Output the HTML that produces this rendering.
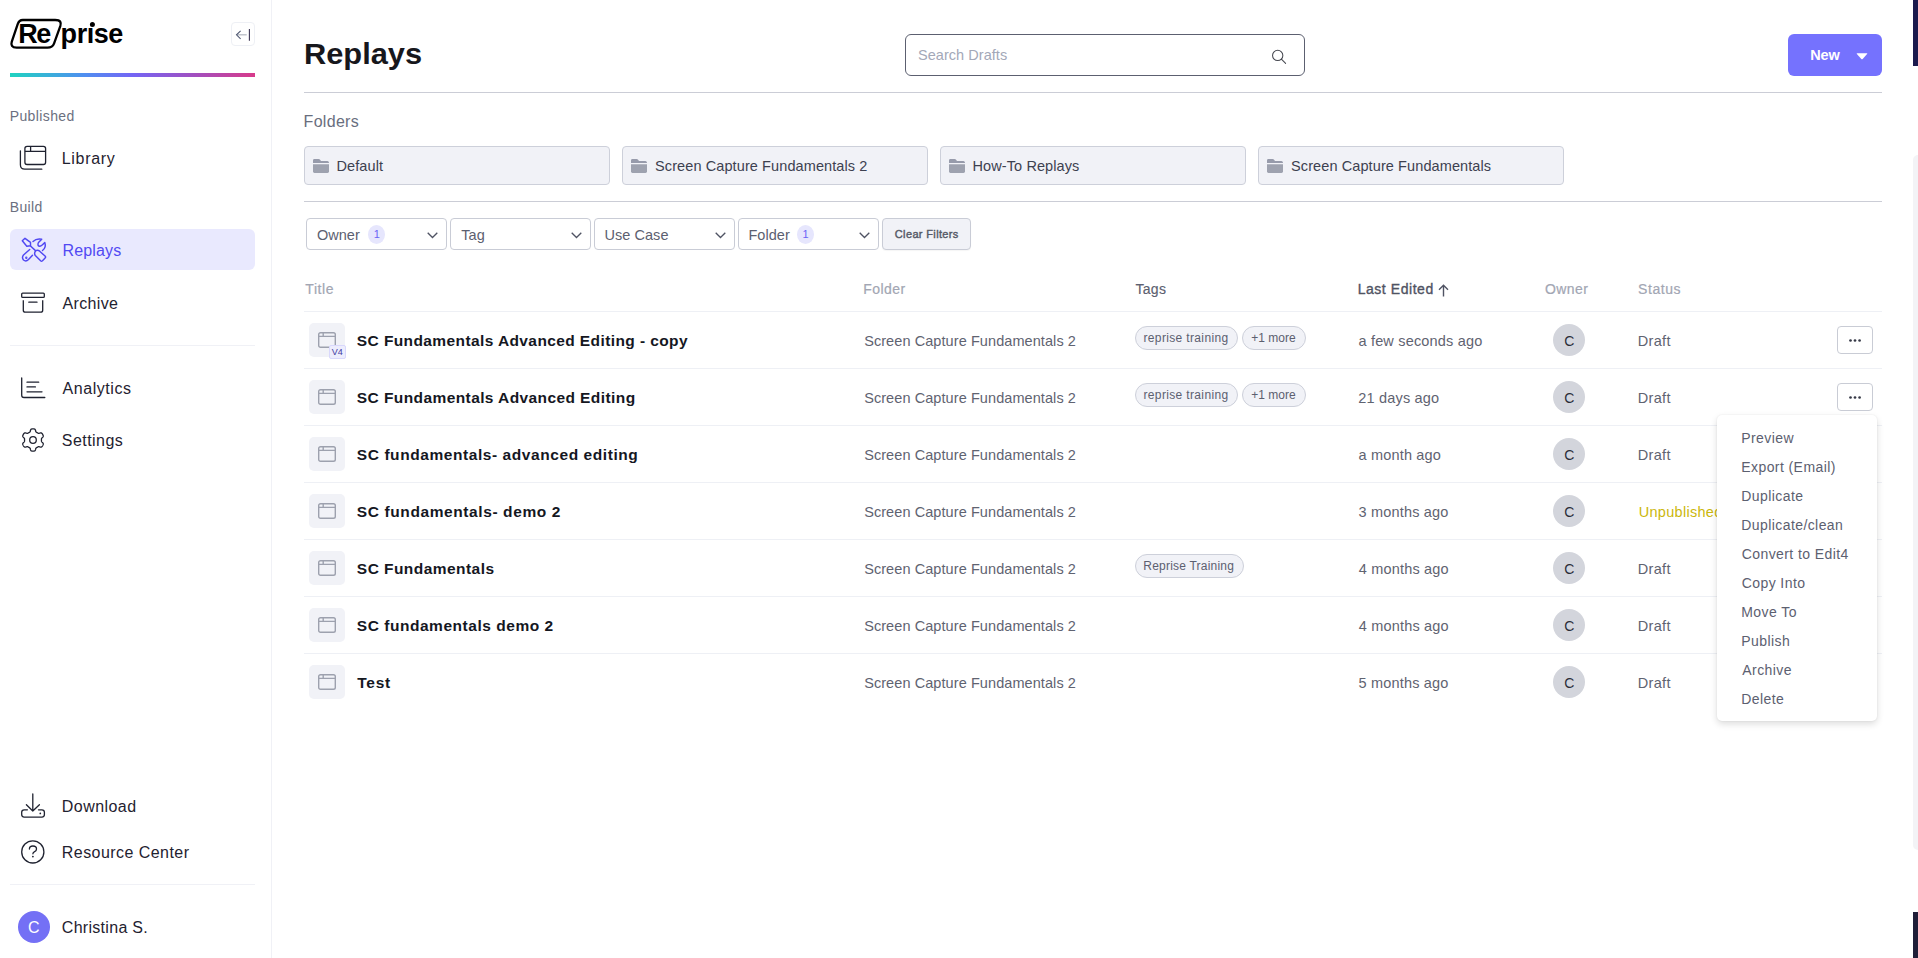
<!DOCTYPE html>
<html><head><meta charset="utf-8"><style>
*{box-sizing:border-box;margin:0;padding:0}
html,body{width:1918px;height:958px;overflow:hidden;background:#fff;font-family:"Liberation Sans",sans-serif}
.abs{position:absolute}
.t{position:absolute;line-height:1;white-space:nowrap}
.hr{position:absolute;height:1px}
svg{position:absolute;overflow:visible}
</style></head><body>
<div class="abs" style="left:271px;top:0;width:1px;height:958px;background:#f0f1f6"></div>
<div class="abs" style="left:10px;top:18px;width:116px;height:32px">
<svg style="left:0;top:0" width="116" height="32" viewBox="0 0 116 32"><path d="M12.8 2 H45.2 C50.6 2 51.5 4.6 50.3 8.2 L44 25.6 C42.9 28.6 41 29.6 37.5 29.6 H6.6 C1.8 29.6 0.7 26.9 1.8 23.6 L7.7 6.2 C8.7 3.2 10 2 12.8 2 Z" fill="none" stroke="#000" stroke-width="2.3"/></svg>
</div>
<div class="t" style="left:18.19px;top:21px;font-size:27px;color:#000;font-weight:bold;letter-spacing:-1.5px;">Re</div>
<div class="t" style="left:60.62px;top:21px;font-size:27px;color:#000;font-weight:bold;letter-spacing:-0.45px;">prıse</div>
<svg style="left:0;top:0" width="130" height="60"><circle cx="92.4" cy="24.6" r="2.5" fill="#000"/></svg>
<div class="abs" style="left:231px;top:22px;width:24px;height:24px;border:1px solid #eef0f5;border-radius:4px"></div>
<svg style="left:225px;top:15px" width="40" height="40" viewBox="0 0 40 40"><path d="M12.2 19.8 H21.7" stroke="#b9bdc6" stroke-width="1.3"/><path d="M15.6 15.9 L11.5 19.8 L15.6 23.9" fill="none" stroke="#4d5670" stroke-width="1.05"/><path d="M24.4 14 V25.7" stroke="#3c3555" stroke-width="1.1"/></svg>
<div class="abs" style="left:10px;top:73px;width:245px;height:4px;background:linear-gradient(90deg,#1fd3c0 0%,#4f8ff0 30%,#7465f5 50%,#a14fc0 75%,#d83a8a 100%)"></div>
<div class="t" style="left:9.65px;top:109px;font-size:14px;color:#6b7080;font-weight:normal;letter-spacing:0.4px;">Published</div>
<svg style="left:14px;top:140px" width="40" height="35" viewBox="0 0 40 35"><g fill="none" stroke="#1f2230" stroke-width="1.3"><rect x="10.9" y="6.4" width="20.7" height="18.1" rx="2.2"/><path d="M10.9 11.3 H31.6 M16.6 6.4 V11.3"/><path d="M6.4 10.8 V24.7 Q6.4 29.2 10.9 29.2 H27.8" stroke-linecap="round"/></g></svg>
<div class="t" style="left:61.69px;top:151px;font-size:16px;color:#1f2230;font-weight:normal;letter-spacing:0.7px;">Library</div>
<div class="t" style="left:9.65px;top:200px;font-size:14px;color:#6b7080;font-weight:normal;letter-spacing:0.4px;">Build</div>
<div class="abs" style="left:10px;top:229px;width:245px;height:41px;border-radius:6px;background:#e9e9fe"></div>
<svg style="left:18px;top:233px" width="32" height="32" viewBox="0 0 32 32"><g fill="none" stroke="#5148f2" stroke-width="1.45" stroke-linejoin="round" stroke-linecap="round"><path d="M15 8.5 Q18.5 5.2 23.7 6.3 L20.5 9.5 Q19 12.5 21.5 13.3 Q23 13.6 26.8 9.5 Q28.5 14.5 24.5 17.5"/><path d="M11.7 16.5 L5.5 22 Q3.5 24.5 5.5 27 Q8 29 10.5 26.5 L14.5 22.2"/><path d="M7 5.3 L12.5 9.3 L12.5 12.7 L8.8 13.3 L4.3 7.8 Z"/><path d="M12.5 13 L17.5 17.6"/><path d="M17.5 18 Q19.5 16.6 21.7 18.2 L27.3 23.3 Q28 24.2 27.1 25.1 L24.5 27.8 Q23.5 28.6 22.6 27.8 L17.3 22.5 Q15.8 20.3 17.5 18 Z"/><circle cx="8.3" cy="24.7" r="0.45" fill="#5148f2"/></g></svg>
<div class="t" style="left:62.49px;top:243px;font-size:16px;color:#5249f3;font-weight:normal;letter-spacing:0.15px;">Replays</div>
<svg style="left:14px;top:285px" width="40" height="35" viewBox="0 0 40 35"><g fill="none" stroke="#1f2230" stroke-width="1.3"><rect x="7.7" y="8.1" width="22.6" height="4.3" rx="1"/><path d="M9.3 15.2 V25.2 Q9.3 27.2 11.3 27.2 H26.7 Q28.7 27.2 28.7 25.2 V15.2"/><path d="M14.8 17.2 H23" stroke-linecap="round"/></g></svg>
<div class="t" style="left:62.47px;top:296px;font-size:16px;color:#1f2230;font-weight:normal;letter-spacing:0.35px;">Archive</div>
<div class="hr" style="left:10px;top:345px;width:245px;background:#f0f1f6"></div>
<svg style="left:14px;top:370px" width="40" height="35" viewBox="0 0 40 35"><g fill="none" stroke="#1f2230" stroke-width="1.3" stroke-linecap="round"><path d="M7.7 8 V25.2 Q7.7 27.5 10 27.5 H30.8"/><path d="M13 12.2 H24.7 M13 16.9 H21.4 M13 21.8 H28"/></g></svg>
<div class="t" style="left:62.57px;top:381px;font-size:16px;color:#1f2230;font-weight:normal;letter-spacing:0.55px;">Analytics</div>
<svg style="left:14px;top:424px" width="40" height="35" viewBox="0 0 40 35"><g fill="none" stroke="#1f2230" stroke-width="1.3" stroke-linejoin="round"><path d="M19.00 4.85 L19.29 4.86 L19.58 4.87 L19.87 4.90 L20.16 4.95 L20.44 5.03 L20.72 5.15 L20.98 5.33 L21.21 5.61 L21.39 6.03 L21.54 6.53 L21.65 7.04 L21.78 7.46 L21.92 7.75 L22.09 7.96 L22.27 8.12 L22.45 8.24 L22.65 8.35 L22.84 8.46 L23.03 8.57 L23.23 8.68 L23.42 8.79 L23.61 8.91 L23.80 9.02 L23.99 9.13 L24.20 9.23 L24.42 9.31 L24.68 9.35 L25.01 9.33 L25.43 9.22 L25.93 9.07 L26.44 8.94 L26.89 8.89 L27.25 8.95 L27.54 9.08 L27.78 9.26 L27.99 9.47 L28.17 9.70 L28.34 9.93 L28.51 10.18 L28.66 10.43 L28.80 10.68 L28.93 10.94 L29.05 11.21 L29.15 11.48 L29.22 11.77 L29.26 12.06 L29.23 12.38 L29.10 12.72 L28.84 13.09 L28.47 13.46 L28.08 13.82 L27.79 14.13 L27.60 14.41 L27.50 14.65 L27.46 14.89 L27.45 15.11 L27.44 15.34 L27.45 15.56 L27.45 15.78 L27.45 16.00 L27.45 16.22 L27.45 16.44 L27.44 16.66 L27.45 16.89 L27.46 17.11 L27.50 17.35 L27.60 17.59 L27.79 17.87 L28.08 18.18 L28.47 18.54 L28.84 18.91 L29.10 19.28 L29.23 19.62 L29.26 19.94 L29.22 20.23 L29.15 20.52 L29.05 20.79 L28.93 21.06 L28.80 21.32 L28.66 21.57 L28.51 21.82 L28.34 22.07 L28.17 22.30 L27.99 22.53 L27.78 22.74 L27.54 22.92 L27.25 23.05 L26.89 23.11 L26.44 23.06 L25.93 22.93 L25.43 22.78 L25.01 22.67 L24.68 22.65 L24.42 22.69 L24.20 22.77 L23.99 22.87 L23.80 22.98 L23.61 23.09 L23.42 23.21 L23.23 23.32 L23.03 23.43 L22.84 23.54 L22.65 23.65 L22.45 23.76 L22.27 23.88 L22.09 24.04 L21.92 24.25 L21.78 24.54 L21.65 24.96 L21.54 25.47 L21.39 25.97 L21.21 26.39 L20.98 26.67 L20.72 26.85 L20.44 26.97 L20.16 27.05 L19.87 27.10 L19.58 27.13 L19.29 27.14 L19.00 27.15 L18.71 27.14 L18.42 27.13 L18.13 27.10 L17.84 27.05 L17.56 26.97 L17.28 26.85 L17.02 26.67 L16.79 26.39 L16.61 25.97 L16.46 25.47 L16.35 24.96 L16.22 24.54 L16.08 24.25 L15.91 24.04 L15.73 23.88 L15.55 23.76 L15.35 23.65 L15.16 23.54 L14.97 23.43 L14.78 23.32 L14.58 23.21 L14.39 23.09 L14.20 22.98 L14.01 22.87 L13.80 22.77 L13.58 22.69 L13.32 22.65 L12.99 22.67 L12.57 22.78 L12.07 22.93 L11.56 23.06 L11.11 23.11 L10.75 23.05 L10.46 22.92 L10.22 22.74 L10.01 22.53 L9.83 22.30 L9.66 22.07 L9.49 21.82 L9.34 21.58 L9.20 21.32 L9.07 21.06 L8.95 20.79 L8.85 20.52 L8.78 20.23 L8.74 19.94 L8.77 19.62 L8.90 19.28 L9.16 18.91 L9.53 18.54 L9.92 18.18 L10.21 17.87 L10.40 17.59 L10.50 17.35 L10.54 17.11 L10.55 16.89 L10.56 16.66 L10.55 16.44 L10.55 16.22 L10.55 16.00 L10.55 15.78 L10.55 15.56 L10.56 15.34 L10.55 15.11 L10.54 14.89 L10.50 14.65 L10.40 14.41 L10.21 14.13 L9.92 13.82 L9.53 13.46 L9.16 13.09 L8.90 12.72 L8.77 12.38 L8.74 12.06 L8.78 11.77 L8.85 11.48 L8.95 11.21 L9.07 10.94 L9.20 10.68 L9.34 10.42 L9.49 10.18 L9.66 9.93 L9.83 9.70 L10.01 9.47 L10.22 9.26 L10.46 9.08 L10.75 8.95 L11.11 8.89 L11.56 8.94 L12.07 9.07 L12.57 9.22 L12.99 9.33 L13.32 9.35 L13.58 9.31 L13.80 9.23 L14.01 9.13 L14.20 9.02 L14.39 8.91 L14.58 8.79 L14.78 8.68 L14.97 8.57 L15.16 8.46 L15.35 8.35 L15.55 8.24 L15.73 8.12 L15.91 7.96 L16.08 7.75 L16.22 7.46 L16.35 7.04 L16.46 6.53 L16.61 6.03 L16.79 5.61 L17.02 5.33 L17.28 5.15 L17.56 5.03 L17.84 4.95 L18.13 4.90 L18.42 4.87 L18.71 4.86 L19.00 4.85 Z"/><circle cx="19" cy="16" r="3.3"/></g></svg>
<div class="t" style="left:61.87px;top:433px;font-size:16px;color:#1f2230;font-weight:normal;letter-spacing:0.45px;">Settings</div>
<svg style="left:14px;top:785px" width="40" height="35" viewBox="0 0 40 35"><g fill="none" stroke="#1f2230" stroke-width="1.3" stroke-linecap="round" stroke-linejoin="round"><path d="M18.8 8.9 V26.1 M12.4 19.7 L18.8 26 L25.4 19.7"/><path d="M13.4 24.8 H10.2 Q7.7 24.8 7.7 27.3 V29.6 Q7.7 32.1 10.2 32.1 H27.9 Q30.4 32.1 30.4 29.6 V27.3 Q30.4 24.8 27.9 24.8 H24.5"/></g><circle cx="26.3" cy="28.4" r="0.85" fill="#1f2230"/></svg>
<div class="t" style="left:61.79px;top:799px;font-size:16px;color:#1f2230;font-weight:normal;letter-spacing:0.45px;">Download</div>
<svg style="left:14px;top:835px" width="40" height="35" viewBox="0 0 40 35"><g fill="none" stroke="#1f2230" stroke-width="1.3" stroke-linecap="round"><circle cx="18.8" cy="16.9" r="11.1"/><path d="M15.4 14.1 Q15.4 11 18.9 11 Q22.5 11 22.5 13.9 Q22.5 15.8 20.6 16.7 Q18.9 17.5 18.9 18.8"/></g><circle cx="18.9" cy="21.6" r="0.9" fill="#1f2230"/></svg>
<div class="t" style="left:61.79px;top:845px;font-size:16px;color:#1f2230;font-weight:normal;letter-spacing:0.45px;">Resource Center</div>
<div class="hr" style="left:10px;top:884px;width:245px;background:#f0f1f6"></div>
<div class="abs" style="left:18px;top:911px;width:32px;height:32px;border-radius:50%;background:#7470f5"></div>
<div class="t" style="left:27.99px;top:920px;font-size:16px;color:#fff;font-weight:normal;letter-spacing:0px;">C</div>
<div class="t" style="left:61.79px;top:920px;font-size:16px;color:#1f2230;font-weight:normal;letter-spacing:0.3px;">Christina S.</div>
<div class="t" style="left:303.79px;top:39px;font-size:30px;color:#17171c;font-weight:bold;letter-spacing:0px;transform:scaleX(1.026);transform-origin:0 0;">Replays</div>
<div class="abs" style="left:905px;top:34px;width:400px;height:41.5px;border:1px solid #5c6070;border-radius:6px"></div>
<div class="t" style="left:917.94px;top:48px;font-size:14.5px;color:#a3a8b8;font-weight:normal;letter-spacing:0.05px;">Search Drafts</div>
<svg style="left:1270px;top:48px" width="20" height="20" viewBox="0 0 20 20"><circle cx="7.7" cy="7.4" r="5.15" fill="none" stroke="#45474f" stroke-width="1.05"/><path d="M11.4 11.2 L15.6 15.4" stroke="#45474f" stroke-width="1.05" stroke-linecap="round"/></svg>
<div class="abs" style="left:1788px;top:34px;width:94px;height:42px;border-radius:6px;background:#7572fe"></div>
<div class="t" style="left:1810.23px;top:48px;font-size:14.5px;color:#fff;font-weight:bold;letter-spacing:-0.1px;">New</div>
<svg style="left:1856px;top:53px" width="12" height="7" viewBox="0 0 12 7"><path d="M1.2 0.2 H10.8 Q11.8 0.2 11.1 1 L6.7 5.9 Q6 6.6 5.3 5.9 L0.9 1 Q0.2 0.2 1.2 0.2 Z" fill="#fff"/></svg>
<div class="hr" style="left:304px;top:92px;width:1578px;background:#cbcdd6"></div>
<div class="t" style="left:303.59px;top:114px;font-size:16px;color:#696e7e;font-weight:normal;letter-spacing:0.3px;">Folders</div>
<div class="abs" style="left:304px;top:146px;width:306px;height:38.5px;border:1px solid #cdd0da;border-radius:4px;background:#f1f2f7"></div>
<svg style="left:313px;top:159px" width="16" height="14" viewBox="0 0 16 14"><path d="M0 4.1 V1.4 Q0 0 1.4 0 H5.6 Q6.4 0 6.9 0.6 L8 1.9 H14.3 Q15.3 1.9 15.8 2.9 L16 4.1 Z" fill="#979bab"/><path d="M0 5.2 H16 V12.6 Q16 14 14.6 14 H1.4 Q0 14 0 12.6 Z" fill="#9ea2af"/></svg>
<div class="t" style="left:336.51px;top:159px;font-size:14.5px;color:#3d4150;font-weight:normal;letter-spacing:0.1px;">Default</div>
<div class="abs" style="left:622px;top:146px;width:306px;height:38.5px;border:1px solid #cdd0da;border-radius:4px;background:#f1f2f7"></div>
<svg style="left:631px;top:159px" width="16" height="14" viewBox="0 0 16 14"><path d="M0 4.1 V1.4 Q0 0 1.4 0 H5.6 Q6.4 0 6.9 0.6 L8 1.9 H14.3 Q15.3 1.9 15.8 2.9 L16 4.1 Z" fill="#979bab"/><path d="M0 5.2 H16 V12.6 Q16 14 14.6 14 H1.4 Q0 14 0 12.6 Z" fill="#9ea2af"/></svg>
<div class="t" style="left:655.04px;top:159px;font-size:14.5px;color:#3d4150;font-weight:normal;letter-spacing:0.1px;">Screen Capture Fundamentals 2</div>
<div class="abs" style="left:940px;top:146px;width:306px;height:38.5px;border:1px solid #cdd0da;border-radius:4px;background:#f1f2f7"></div>
<svg style="left:949px;top:159px" width="16" height="14" viewBox="0 0 16 14"><path d="M0 4.1 V1.4 Q0 0 1.4 0 H5.6 Q6.4 0 6.9 0.6 L8 1.9 H14.3 Q15.3 1.9 15.8 2.9 L16 4.1 Z" fill="#979bab"/><path d="M0 5.2 H16 V12.6 Q16 14 14.6 14 H1.4 Q0 14 0 12.6 Z" fill="#9ea2af"/></svg>
<div class="t" style="left:972.51px;top:159px;font-size:14.5px;color:#3d4150;font-weight:normal;letter-spacing:0.1px;">How-To Replays</div>
<div class="abs" style="left:1258px;top:146px;width:306px;height:38.5px;border:1px solid #cdd0da;border-radius:4px;background:#f1f2f7"></div>
<svg style="left:1267px;top:159px" width="16" height="14" viewBox="0 0 16 14"><path d="M0 4.1 V1.4 Q0 0 1.4 0 H5.6 Q6.4 0 6.9 0.6 L8 1.9 H14.3 Q15.3 1.9 15.8 2.9 L16 4.1 Z" fill="#979bab"/><path d="M0 5.2 H16 V12.6 Q16 14 14.6 14 H1.4 Q0 14 0 12.6 Z" fill="#9ea2af"/></svg>
<div class="t" style="left:1291.04px;top:159px;font-size:14.5px;color:#3d4150;font-weight:normal;letter-spacing:0.1px;">Screen Capture Fundamentals</div>
<div class="hr" style="left:304px;top:201px;width:1578px;background:#cbcdd6"></div>
<div class="abs" style="left:306px;top:218px;width:140.5px;height:31.5px;border:1px solid #c9ccd6;border-radius:4px;background:#fff"></div>
<div class="t" style="left:316.91px;top:228px;font-size:14.5px;color:#5c6070;font-weight:normal;letter-spacing:0.05px;">Owner</div>
<div class="abs" style="left:368px;top:225px;width:17px;height:19px;border-radius:50%;background:#e6e6fd"></div>
<div class="t" style="left:373.66px;top:229px;font-size:11px;color:#6b63f5;font-weight:normal;letter-spacing:0px;">1</div>
<svg style="left:427px;top:231.5px" width="11" height="7" viewBox="0 0 11 7"><path d="M0.7 0.7 L5.5 5.5 L10.3 0.7" fill="none" stroke="#4f5363" stroke-width="1.3"/></svg>
<div class="abs" style="left:450px;top:218px;width:140.5px;height:31.5px;border:1px solid #c9ccd6;border-radius:4px;background:#fff"></div>
<div class="t" style="left:461.27px;top:228px;font-size:14.5px;color:#5c6070;font-weight:normal;letter-spacing:0.05px;">Tag</div>
<svg style="left:571px;top:231.5px" width="11" height="7" viewBox="0 0 11 7"><path d="M0.7 0.7 L5.5 5.5 L10.3 0.7" fill="none" stroke="#4f5363" stroke-width="1.3"/></svg>
<div class="abs" style="left:594px;top:218px;width:140.5px;height:31.5px;border:1px solid #c9ccd6;border-radius:4px;background:#fff"></div>
<div class="t" style="left:604.48px;top:228px;font-size:14.5px;color:#5c6070;font-weight:normal;letter-spacing:0.05px;">Use Case</div>
<svg style="left:715px;top:231.5px" width="11" height="7" viewBox="0 0 11 7"><path d="M0.7 0.7 L5.5 5.5 L10.3 0.7" fill="none" stroke="#4f5363" stroke-width="1.3"/></svg>
<div class="abs" style="left:738px;top:218px;width:140.5px;height:31.5px;border:1px solid #c9ccd6;border-radius:4px;background:#fff"></div>
<div class="t" style="left:748.41px;top:228px;font-size:14.5px;color:#5c6070;font-weight:normal;letter-spacing:0.05px;">Folder</div>
<div class="abs" style="left:796.8px;top:225px;width:17px;height:19px;border-radius:50%;background:#e6e6fd"></div>
<div class="t" style="left:802.46px;top:229px;font-size:11px;color:#6b63f5;font-weight:normal;letter-spacing:0px;">1</div>
<svg style="left:859px;top:231.5px" width="11" height="7" viewBox="0 0 11 7"><path d="M0.7 0.7 L5.5 5.5 L10.3 0.7" fill="none" stroke="#4f5363" stroke-width="1.3"/></svg>
<div class="abs" style="left:882px;top:218px;width:88.5px;height:31.5px;border:1px solid #c9ccd6;border-radius:4px;background:#f1f2f7;box-shadow:0 1px 1px rgba(0,0,0,0.04)"></div>
<div class="t" style="left:894.84px;top:229px;font-size:11px;color:#555966;font-weight:normal;letter-spacing:0.35px;-webkit-text-stroke:0.4px #555966;">Clear Filters</div>
<div class="t" style="left:305.29px;top:282px;font-size:14px;color:#a2a6b3;font-weight:normal;letter-spacing:0.59px;-webkit-text-stroke:0.2px #a2a6b3;">Title</div>
<div class="t" style="left:863.25px;top:282px;font-size:14px;color:#a2a6b3;font-weight:normal;letter-spacing:0.44px;-webkit-text-stroke:0.2px #a2a6b3;">Folder</div>
<div class="t" style="left:1135.39px;top:282px;font-size:14px;color:#5c6070;font-weight:normal;letter-spacing:0.31px;-webkit-text-stroke:0.15px #5c6070;">Tags</div>
<div class="t" style="left:1357.65px;top:282px;font-size:14px;color:#4f5363;font-weight:normal;letter-spacing:0.55px;-webkit-text-stroke:0.35px #4f5363;">Last Edited</div>
<svg style="left:1437.5px;top:283.5px" width="11" height="13" viewBox="0 0 11 13"><path d="M5.5 12.5 V1.2 M1 5.7 L5.5 1.2 L10 5.7" fill="none" stroke="#4f5363" stroke-width="1.4"/></svg>
<div class="t" style="left:1544.94px;top:282px;font-size:14px;color:#a2a6b3;font-weight:normal;letter-spacing:0.46px;-webkit-text-stroke:0.2px #a2a6b3;">Owner</div>
<div class="t" style="left:1638.06px;top:282px;font-size:14px;color:#a2a6b3;font-weight:normal;letter-spacing:0.56px;-webkit-text-stroke:0.2px #a2a6b3;">Status</div>
<div class="hr" style="left:304px;top:311px;width:1578px;background:#eef0f5"></div>
<div class="abs" style="left:309px;top:323px;width:36px;height:34px;border-radius:5px;background:#f1f2f7"></div>
<svg style="left:318px;top:332px" width="18" height="16" viewBox="0 0 18 16"><rect x="0.7" y="0.7" width="16.6" height="14.6" rx="1.8" fill="none" stroke="#9da1ae" stroke-width="1.4"/><path d="M0.7 4.4 H17.3 M5.2 0.7 V4.4" stroke="#9da1ae" stroke-width="1.4"/></svg>
<div class="abs" style="left:329px;top:345px;width:17px;height:14px;border:1px solid #d9d8fc;border-radius:2px;background:#ededfd"></div>
<div class="t" style="left:331.86px;top:348px;font-size:9px;color:#3d3a9f;font-weight:normal;letter-spacing:0px;">V4</div>
<div class="t" style="left:356.85px;top:333px;font-size:15.5px;color:#15171f;font-weight:bold;letter-spacing:0.4px;">SC Fundamentals Advanced Editing - copy</div>
<div class="t" style="left:864.14px;top:334px;font-size:14.5px;color:#5f6371;font-weight:normal;letter-spacing:0.08px;">Screen Capture Fundamentals 2</div>
<div class="abs" style="left:1135px;top:326px;width:103px;height:24px;border:1px solid #cdd0da;border-radius:12px;background:#f1f2f7"></div>
<div class="t" style="left:1143.50px;top:332px;font-size:12px;color:#5c6070;font-weight:normal;letter-spacing:0.35px;">reprise training</div>
<div class="abs" style="left:1242px;top:326px;width:64px;height:24px;border:1px solid #cdd0da;border-radius:12px;background:#f1f2f7"></div>
<div class="t" style="left:1251.21px;top:332px;font-size:12px;color:#5c6070;font-weight:normal;letter-spacing:0px;">+1 more</div>
<div class="t" style="left:1358.48px;top:334px;font-size:14.5px;color:#5f6371;font-weight:normal;letter-spacing:0.18px;">a few seconds ago</div>
<div class="abs" style="left:1553px;top:324px;width:32px;height:32px;border-radius:50%;background:#d3d5dc"></div>
<div class="t" style="left:1564.29px;top:334px;font-size:14px;color:#2a2d38;font-weight:normal;letter-spacing:0px;">C</div>
<div class="t" style="left:1637.81px;top:334px;font-size:14.5px;color:#5f6371;font-weight:normal;letter-spacing:0.3px;">Draft</div>
<div class="abs" style="left:1837px;top:326px;width:36px;height:28px;border:1px solid #c9ccd5;border-radius:4px;background:#fff"></div>
<svg style="left:1849px;top:338px" width="12" height="4" viewBox="0 0 12 4"><circle cx="1.5" cy="2.5" r="1.35" fill="#363946"/><circle cx="6" cy="2.5" r="1.35" fill="#363946"/><circle cx="10.6" cy="2.5" r="1.35" fill="#363946"/></svg>
<div class="hr" style="left:304px;top:368px;width:1578px;background:#eef0f5"></div>
<div class="abs" style="left:309px;top:380px;width:36px;height:34px;border-radius:5px;background:#f1f2f7"></div>
<svg style="left:318px;top:389px" width="18" height="16" viewBox="0 0 18 16"><rect x="0.7" y="0.7" width="16.6" height="14.6" rx="1.8" fill="none" stroke="#9da1ae" stroke-width="1.4"/><path d="M0.7 4.4 H17.3 M5.2 0.7 V4.4" stroke="#9da1ae" stroke-width="1.4"/></svg>
<div class="t" style="left:356.85px;top:390px;font-size:15.5px;color:#15171f;font-weight:bold;letter-spacing:0.41px;">SC Fundamentals Advanced Editing</div>
<div class="t" style="left:864.14px;top:391px;font-size:14.5px;color:#5f6371;font-weight:normal;letter-spacing:0.08px;">Screen Capture Fundamentals 2</div>
<div class="abs" style="left:1135px;top:383px;width:103px;height:24px;border:1px solid #cdd0da;border-radius:12px;background:#f1f2f7"></div>
<div class="t" style="left:1143.50px;top:389px;font-size:12px;color:#5c6070;font-weight:normal;letter-spacing:0.35px;">reprise training</div>
<div class="abs" style="left:1242px;top:383px;width:64px;height:24px;border:1px solid #cdd0da;border-radius:12px;background:#f1f2f7"></div>
<div class="t" style="left:1251.21px;top:389px;font-size:12px;color:#5c6070;font-weight:normal;letter-spacing:0px;">+1 more</div>
<div class="t" style="left:1358.37px;top:391px;font-size:14.5px;color:#5f6371;font-weight:normal;letter-spacing:0.18px;">21 days ago</div>
<div class="abs" style="left:1553px;top:381px;width:32px;height:32px;border-radius:50%;background:#d3d5dc"></div>
<div class="t" style="left:1564.29px;top:391px;font-size:14px;color:#2a2d38;font-weight:normal;letter-spacing:0px;">C</div>
<div class="t" style="left:1637.81px;top:391px;font-size:14.5px;color:#5f6371;font-weight:normal;letter-spacing:0.3px;">Draft</div>
<div class="abs" style="left:1837px;top:383px;width:36px;height:28px;border:1px solid #c9ccd5;border-radius:4px;background:#fff"></div>
<svg style="left:1849px;top:395px" width="12" height="4" viewBox="0 0 12 4"><circle cx="1.5" cy="2.5" r="1.35" fill="#363946"/><circle cx="6" cy="2.5" r="1.35" fill="#363946"/><circle cx="10.6" cy="2.5" r="1.35" fill="#363946"/></svg>
<div class="hr" style="left:304px;top:425px;width:1578px;background:#eef0f5"></div>
<div class="abs" style="left:309px;top:437px;width:36px;height:34px;border-radius:5px;background:#f1f2f7"></div>
<svg style="left:318px;top:446px" width="18" height="16" viewBox="0 0 18 16"><rect x="0.7" y="0.7" width="16.6" height="14.6" rx="1.8" fill="none" stroke="#9da1ae" stroke-width="1.4"/><path d="M0.7 4.4 H17.3 M5.2 0.7 V4.4" stroke="#9da1ae" stroke-width="1.4"/></svg>
<div class="t" style="left:356.85px;top:447px;font-size:15.5px;color:#15171f;font-weight:bold;letter-spacing:0.57px;">SC fundamentals- advanced editing</div>
<div class="t" style="left:864.14px;top:448px;font-size:14.5px;color:#5f6371;font-weight:normal;letter-spacing:0.08px;">Screen Capture Fundamentals 2</div>
<div class="t" style="left:1358.48px;top:448px;font-size:14.5px;color:#5f6371;font-weight:normal;letter-spacing:0.18px;">a month ago</div>
<div class="abs" style="left:1553px;top:438px;width:32px;height:32px;border-radius:50%;background:#d3d5dc"></div>
<div class="t" style="left:1564.29px;top:448px;font-size:14px;color:#2a2d38;font-weight:normal;letter-spacing:0px;">C</div>
<div class="t" style="left:1637.81px;top:448px;font-size:14.5px;color:#5f6371;font-weight:normal;letter-spacing:0.3px;">Draft</div>
<div class="hr" style="left:304px;top:482px;width:1578px;background:#eef0f5"></div>
<div class="abs" style="left:309px;top:494px;width:36px;height:34px;border-radius:5px;background:#f1f2f7"></div>
<svg style="left:318px;top:503px" width="18" height="16" viewBox="0 0 18 16"><rect x="0.7" y="0.7" width="16.6" height="14.6" rx="1.8" fill="none" stroke="#9da1ae" stroke-width="1.4"/><path d="M0.7 4.4 H17.3 M5.2 0.7 V4.4" stroke="#9da1ae" stroke-width="1.4"/></svg>
<div class="t" style="left:356.85px;top:504px;font-size:15.5px;color:#15171f;font-weight:bold;letter-spacing:0.6px;">SC fundamentals- demo 2</div>
<div class="t" style="left:864.14px;top:505px;font-size:14.5px;color:#5f6371;font-weight:normal;letter-spacing:0.08px;">Screen Capture Fundamentals 2</div>
<div class="t" style="left:1358.55px;top:505px;font-size:14.5px;color:#5f6371;font-weight:normal;letter-spacing:0.18px;">3 months ago</div>
<div class="abs" style="left:1553px;top:495px;width:32px;height:32px;border-radius:50%;background:#d3d5dc"></div>
<div class="t" style="left:1564.29px;top:505px;font-size:14px;color:#2a2d38;font-weight:normal;letter-spacing:0px;">C</div>
<div class="t" style="left:1638.68px;top:505px;font-size:14.5px;color:#cbb70c;font-weight:normal;letter-spacing:0.3px;">Unpublished Changes</div>
<div class="hr" style="left:304px;top:539px;width:1578px;background:#eef0f5"></div>
<div class="abs" style="left:309px;top:551px;width:36px;height:34px;border-radius:5px;background:#f1f2f7"></div>
<svg style="left:318px;top:560px" width="18" height="16" viewBox="0 0 18 16"><rect x="0.7" y="0.7" width="16.6" height="14.6" rx="1.8" fill="none" stroke="#9da1ae" stroke-width="1.4"/><path d="M0.7 4.4 H17.3 M5.2 0.7 V4.4" stroke="#9da1ae" stroke-width="1.4"/></svg>
<div class="t" style="left:356.85px;top:561px;font-size:15.5px;color:#15171f;font-weight:bold;letter-spacing:0.45px;">SC Fundamentals</div>
<div class="t" style="left:864.14px;top:562px;font-size:14.5px;color:#5f6371;font-weight:normal;letter-spacing:0.08px;">Screen Capture Fundamentals 2</div>
<div class="abs" style="left:1135px;top:554px;width:109px;height:24px;border:1px solid #cdd0da;border-radius:12px;background:#f1f2f7"></div>
<div class="t" style="left:1143.32px;top:560px;font-size:12px;color:#5c6070;font-weight:normal;letter-spacing:0.21px;">Reprise Training</div>
<div class="t" style="left:1358.77px;top:562px;font-size:14.5px;color:#5f6371;font-weight:normal;letter-spacing:0.18px;">4 months ago</div>
<div class="abs" style="left:1553px;top:552px;width:32px;height:32px;border-radius:50%;background:#d3d5dc"></div>
<div class="t" style="left:1564.29px;top:562px;font-size:14px;color:#2a2d38;font-weight:normal;letter-spacing:0px;">C</div>
<div class="t" style="left:1637.81px;top:562px;font-size:14.5px;color:#5f6371;font-weight:normal;letter-spacing:0.3px;">Draft</div>
<div class="hr" style="left:304px;top:596px;width:1578px;background:#eef0f5"></div>
<div class="abs" style="left:309px;top:608px;width:36px;height:34px;border-radius:5px;background:#f1f2f7"></div>
<svg style="left:318px;top:617px" width="18" height="16" viewBox="0 0 18 16"><rect x="0.7" y="0.7" width="16.6" height="14.6" rx="1.8" fill="none" stroke="#9da1ae" stroke-width="1.4"/><path d="M0.7 4.4 H17.3 M5.2 0.7 V4.4" stroke="#9da1ae" stroke-width="1.4"/></svg>
<div class="t" style="left:356.85px;top:618px;font-size:15.5px;color:#15171f;font-weight:bold;letter-spacing:0.53px;">SC fundamentals demo 2</div>
<div class="t" style="left:864.14px;top:619px;font-size:14.5px;color:#5f6371;font-weight:normal;letter-spacing:0.08px;">Screen Capture Fundamentals 2</div>
<div class="t" style="left:1358.77px;top:619px;font-size:14.5px;color:#5f6371;font-weight:normal;letter-spacing:0.18px;">4 months ago</div>
<div class="abs" style="left:1553px;top:609px;width:32px;height:32px;border-radius:50%;background:#d3d5dc"></div>
<div class="t" style="left:1564.29px;top:619px;font-size:14px;color:#2a2d38;font-weight:normal;letter-spacing:0px;">C</div>
<div class="t" style="left:1637.81px;top:619px;font-size:14.5px;color:#5f6371;font-weight:normal;letter-spacing:0.3px;">Draft</div>
<div class="hr" style="left:304px;top:653px;width:1578px;background:#eef0f5"></div>
<div class="abs" style="left:309px;top:665px;width:36px;height:34px;border-radius:5px;background:#f1f2f7"></div>
<svg style="left:318px;top:674px" width="18" height="16" viewBox="0 0 18 16"><rect x="0.7" y="0.7" width="16.6" height="14.6" rx="1.8" fill="none" stroke="#9da1ae" stroke-width="1.4"/><path d="M0.7 4.4 H17.3 M5.2 0.7 V4.4" stroke="#9da1ae" stroke-width="1.4"/></svg>
<div class="t" style="left:357.13px;top:675px;font-size:15.5px;color:#15171f;font-weight:bold;letter-spacing:0.8px;">Test</div>
<div class="t" style="left:864.14px;top:676px;font-size:14.5px;color:#5f6371;font-weight:normal;letter-spacing:0.08px;">Screen Capture Fundamentals 2</div>
<div class="t" style="left:1358.52px;top:676px;font-size:14.5px;color:#5f6371;font-weight:normal;letter-spacing:0.18px;">5 months ago</div>
<div class="abs" style="left:1553px;top:666px;width:32px;height:32px;border-radius:50%;background:#d3d5dc"></div>
<div class="t" style="left:1564.29px;top:676px;font-size:14px;color:#2a2d38;font-weight:normal;letter-spacing:0px;">C</div>
<div class="t" style="left:1637.81px;top:676px;font-size:14.5px;color:#5f6371;font-weight:normal;letter-spacing:0.3px;">Draft</div>
<div class="abs" style="left:1717px;top:415px;width:160px;height:306px;background:#fff;border-radius:5px;box-shadow:0 3px 7px rgba(0,0,0,0.14),0 0 2px rgba(0,0,0,0.07)"></div>
<div class="t" style="left:1741.25px;top:431px;font-size:14px;color:#5c6070;font-weight:normal;letter-spacing:0.42px;">Preview</div>
<div class="t" style="left:1741.25px;top:460px;font-size:14px;color:#5c6070;font-weight:normal;letter-spacing:0.42px;">Export (Email)</div>
<div class="t" style="left:1741.25px;top:489px;font-size:14px;color:#5c6070;font-weight:normal;letter-spacing:0.42px;">Duplicate</div>
<div class="t" style="left:1741.25px;top:518px;font-size:14px;color:#5c6070;font-weight:normal;letter-spacing:0.42px;">Duplicate/clean</div>
<div class="t" style="left:1741.69px;top:547px;font-size:14px;color:#5c6070;font-weight:normal;letter-spacing:0.42px;">Convert to Edit4</div>
<div class="t" style="left:1741.69px;top:576px;font-size:14px;color:#5c6070;font-weight:normal;letter-spacing:0.42px;">Copy Into</div>
<div class="t" style="left:1741.25px;top:605px;font-size:14px;color:#5c6070;font-weight:normal;letter-spacing:0.42px;">Move To</div>
<div class="t" style="left:1741.25px;top:634px;font-size:14px;color:#5c6070;font-weight:normal;letter-spacing:0.42px;">Publish</div>
<div class="t" style="left:1742.37px;top:663px;font-size:14px;color:#5c6070;font-weight:normal;letter-spacing:0.42px;">Archive</div>
<div class="t" style="left:1741.25px;top:692px;font-size:14px;color:#5c6070;font-weight:normal;letter-spacing:0.42px;">Delete</div>
<div class="abs" style="left:1913px;top:0;width:5px;height:66px;background:#1b1a4e"></div>
<div class="abs" style="left:1913px;top:155px;width:5px;height:695px;background:#f3f3f6;border-radius:6px 0 0 6px"></div>
<div class="abs" style="left:1913px;top:912px;width:5px;height:46px;background:#1f1e38"></div>
</body></html>
